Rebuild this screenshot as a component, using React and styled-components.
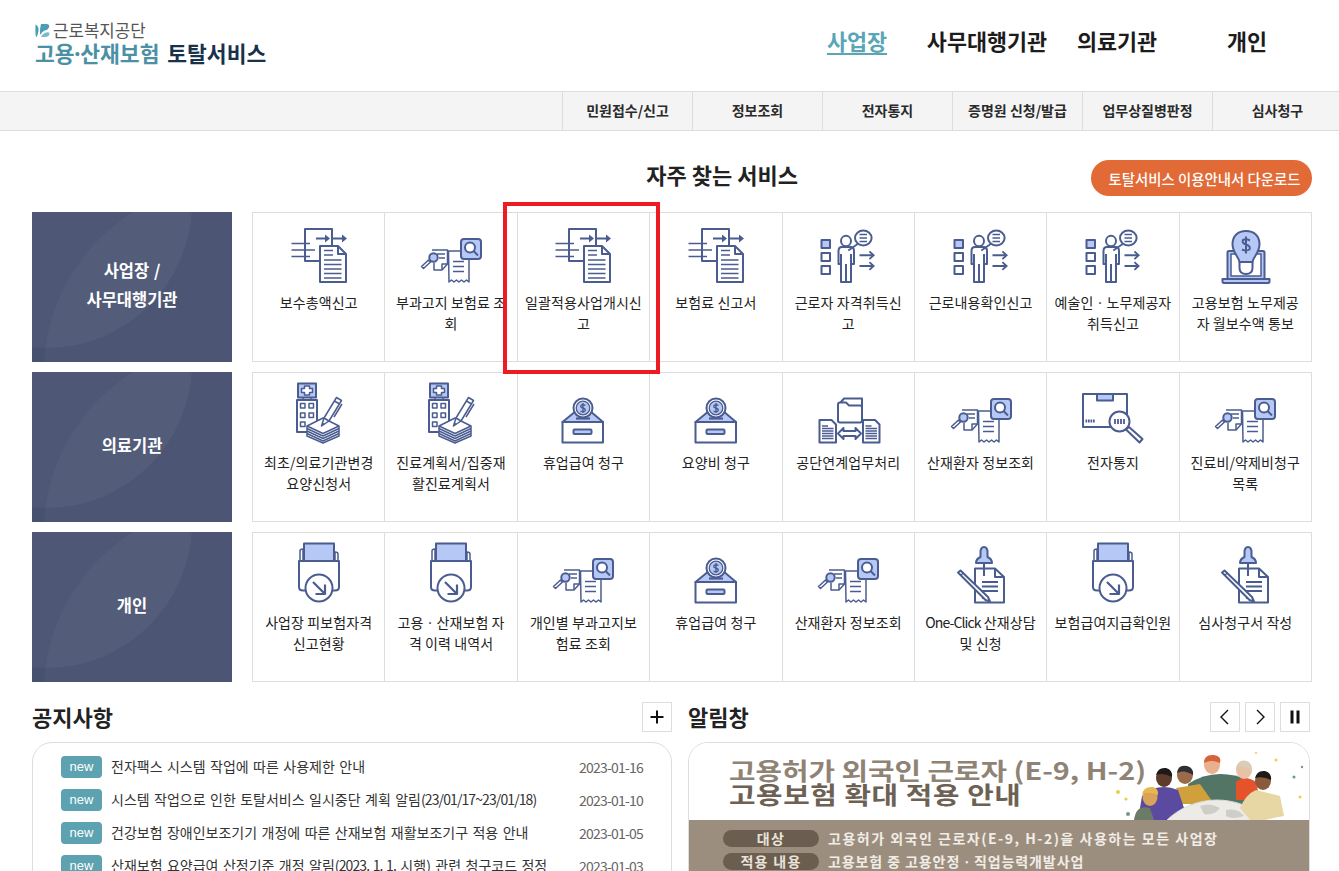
import React from 'react';
import styled, { createGlobalStyle } from 'styled-components';

const FONT = `"Noto Sans CJK KR", "Noto Sans", sans-serif`;

const GlobalStyle = createGlobalStyle`
  html, body { margin: 0; padding: 0; background: #fff; overflow: hidden; }
  body { font-family: ${FONT}; color: #222; }
  * { box-sizing: border-box; }
`;

const Page = styled.div`
  position: relative;
  width: 1339px;
  height: 871px;
  overflow: hidden;
  background: #fff;
`;

const Header = styled.header`
  height: 91px;
  display: flex;
  justify-content: space-between;
  padding: 0 27px 0 35px;
`;
const Logo = styled.div`
  display: flex;
  flex-direction: column;
  padding-top: 20px;
`;
const LogoTop = styled.div`
  display: flex;
  align-items: center;
  gap: 3px;
  height: 20px;
  font-size: 16.8px;
  line-height: 20px;
  color: #555;
`;
const LogoMain = styled.div`
  font-size: 21.5px;
  line-height: 26px;
  font-weight: 700;
  color: #17324a;
  white-space: nowrap;
`;
const LogoAccent = styled.span`
  color: #4b91a5;
  margin-right: 3px;
`;
const LogoDot = styled.span`
  margin: 0 -3.5px;
`;
const TopNav = styled.nav`
  display: flex;
  padding-top: 25px;
`;
const TopNavItem = styled.a`
  width: 130px;
  height: 32px;
  text-align: center;
  font-size: 21.8px;
  line-height: 32px;
  font-weight: 700;
  color: ${p => (p.$active ? '#5aa5b6' : '#1c1c1c')};
  text-decoration: ${p => (p.$active ? 'underline' : 'none')};
  text-underline-offset: 3px;
`;

const SubNav = styled.div`
  height: 40px;
  display: flex;
  padding-left: 562px;
  background: #f4f4f4;
  border-top: 1px solid #ddd;
  border-bottom: 1px solid #ddd;
  overflow: hidden;
`;
const SubNavItem = styled.a`
  flex: 0 0 130px;
  text-align: center;
  font-size: 14px;
  line-height: 36px;
  font-weight: 700;
  color: #2a2a2a;
  border-left: 1px solid #ddd;
`;

const Main = styled.main`
  padding: 29px 27px 0 32px;
`;
const ServiceHead = styled.div`
  height: 36px;
  display: flex;
  justify-content: flex-end;
  align-items: center;
  gap: 293px;
  margin-bottom: 16px;
`;
const ServiceTitle = styled.h2`
  margin: 0 0 9px;
  font-size: 22px;
  line-height: 30px;
  font-weight: 700;
  color: #222;
`;
const GuideButton = styled.a`
  width: 221px;
  height: 36px;
  padding-left: 6px;
  border-radius: 18px;
  background: #e26a36;
  color: #fff;
  font-size: 14.4px;
  line-height: 37px;
  font-weight: 500;
  text-align: center;
  white-space: nowrap;
`;

const Row = styled.section`
  display: grid;
  grid-template-columns: 200px 1060px;
  column-gap: 20px;
  height: 150px;
  margin-bottom: 10px;
`;
const RowLabel = styled.div`
  position: relative;
  overflow: hidden;
  display: flex;
  flex-direction: column;
  align-items: center;
  justify-content: center;
  padding-bottom: 4px;
  background: #475170;
  color: #fff;
  font-size: 16.5px;
  line-height: 29px;
  font-weight: 700;
  word-spacing: 1px;
  &::before, &::after {
    content: '';
    position: absolute;
    border-radius: 50%;
  }
  &::before {
    left: -130px;
    top: -154px;
    width: 290px;
    height: 290px;
    background: rgba(255, 255, 255, 0.04);
  }
  &::after {
    left: 12px;
    top: -28px;
    width: 376px;
    height: 376px;
    background: rgba(255, 255, 255, 0.03);
  }
  span { position: relative; z-index: 1; }
`;
const ServiceGrid = styled.div`
  display: grid;
  grid-template-columns: repeat(8, 1fr);
  border-top: 1px solid #ddd;
  border-left: 1px solid #ddd;
`;
const ServiceCell = styled.a`
  display: flex;
  flex-direction: column;
  align-items: center;
  padding: 7px 7px 0;
  border-right: 1px solid #ddd;
  border-bottom: 1px solid #ddd;
  font-size: 14px;
  line-height: 21px;
  color: #222;
  text-align: center;
  word-break: break-all;
  letter-spacing: 0.1px;
`;
const CellLabel = styled.span`
  display: block;
  margin-top: 8px;
`;
const Narrow = styled.span`
  letter-spacing: -0.9px;
`;

const IconSvg = styled.svg.attrs({ viewBox: '0 0 80 64' })`
  flex: none;
  width: 80px;
  height: 64px;
  fill: none;
  stroke: #4b5d90;
  stroke-width: 2;
  stroke-linejoin: round;
  .f { fill: #b6c9f6; }
  .w { fill: #fff; }
  .s { fill: #4b5d90; stroke: none; }
  .t { stroke-width: 1.5; }
`;

const Docs = () => (
  <IconSvg>
    <rect className="w" x="26" y="9" width="27" height="32" />
    <path className="t" d="M12.5 23.5H31M12.5 30H36M12.5 36.5H31" />
    <path d="M37 18.5H47M54 18.5H64" />
    <path className="s" d="M46 14.5l5 4-5 4zM63 14.5l5 4-5 4z" />
    <path className="w" d="M41 26H59L67 34V62H41Z" />
    <path d="M59 26V34H67" />
    <path className="t" d="M45 30.5H54M45 35H54M45 40H62.5M45 44.5H62.5M45 49H62.5M45 53.5H62.5M45 58H62.5" />
  </IconSvg>
);

const SearchBill = () => (
  <IconSvg>
    <path className="w t" d="M21 30H36.5V44L31 50H23V43" />
    <path className="t" d="M31 50V44H36.5M26 34H34M28 38H34" />
    <path className="w t" d="M37.5 31H58V62l-2.5-2-2.5 2-2.5-2-2.5 2-2.5-2-2.5 2-2.5-2-2.5 2Z" />
    <path className="t" d="M42 41.5H53M42 46.5H53M42 51.5H53" />
    <rect className="f" x="50" y="19" width="20" height="20" rx="3" />
    <circle className="w" cx="59" cy="27.5" r="5" />
    <path d="M62.5 31L67 35.5" />
    <path className="w t" d="M10.500 46.500L17.500 40L19.500 42L12.500 48.500Z" />
    <circle className="f" cx="22.5" cy="37.5" r="4.2" />
  </IconSvg>
);

const Presenter = () => (
  <IconSvg>
    <rect className="f" x="13.5" y="20" width="8.500" height="8" />
    <rect x="13.5" y="33" width="8.500" height="8" />
    <rect x="13.5" y="46" width="8.500" height="8" />
    <ellipse cx="38" cy="21" rx="5" ry="5.200" />
    <path d="M33 62V44H30.500V31Q30.500 27 34 27H42.500Q46 27 46 31V44H43V62ZM38 62V44M33 34V44M43 34V44" />
    <ellipse className="w" cx="55.300" cy="18" rx="8.300" ry="7.500" />
    <path strokeWidth="1.600" d="M51.500 14.500H59M51.500 18H59M51.500 21.500H59" />
    <path d="M49.700 24L40.300 30.500" strokeWidth="1.800" />
    <path d="M51.500 35.300H65M51.500 46H65" />
    <path className="s" d="M62 30.800l5 4.500-5 4.500-1.200-1.200 3.300-3.300-3.300-3.300zM62 41.500l5 4.500-5 4.500-1.200-1.200 3.300-3.300-3.300-3.300z" />
  </IconSvg>
);

const Bulb = () => (
  <IconSvg>
    <path className="f" d="M22.500 59V32.500Q22.500 31 24 31H58Q59.500 31 59.500 32.500V59Z" />
    <rect className="w t" x="26" y="34" width="30" height="22" />
    <path className="f" d="M17.500 59H64.500V61.500Q64.500 63 63 63H19Q17.500 63 17.500 61.500Z" />
    <path className="f" d="M34.500 42C34 37 27.500 33 27.500 24C27.500 16 33 11 41 11C49 11 54.500 16 54.500 24C54.500 33 48 37 47.500 42Z" />
    <path className="w" d="M34.500 42H47.500V48Q47.500 54 41 54Q34.500 54 34.500 48Z" />
    <path d="M45 20.500Q41 18.500 38 20Q36.500 23 41 24.500Q46 26 44.500 29.500Q41 31.500 37 29.500M41 16.500V33.500" />
  </IconSvg>
);

const Hospital = () => (
  <IconSvg>
    <rect className="f" x="19" y="3.500" width="18" height="14" />
    <path className="w t" d="M25.500 6H30.500V8.500H33.500V12.500H30.500V15H25.500V12.500H22.500V8.500H25.500Z" />
    <path className="t" d="M24 17.500V20M32 17.500V20" />
    <rect className="w" x="18" y="20" width="20" height="32" />
    <path className="t" d="M21.500 23.500h4.500v4.500h-4.500zM30 23.500h4.500v4.500h-4.500zM21.500 33h4.500v4.500h-4.500zM30 33h4.500v4.500h-4.500zM21.500 42h4.500v4.500h-4.500z" />
    <path className="w t" d="M28 46V56L44 63L60 56V46L44 38Z" />
    <path className="t" d="M28 46L44 53.500L60 46M28 48.500L44 56L60 48.500M28 51L44 58.500L60 51M28 53.500L44 61L60 53.500" />
    <path className="w t" d="M42.500 46L45 38L57.500 17.500L62.500 20.500L50 41Z" />
    <path className="t" d="M45 38L50 41M55.500 21L60.500 24M63 24L55 37" />
    <path className="s" d="M42.500 46L43.500 42.500L46 44Z" />
  </IconSvg>
);

const CoinBox = () => (
  <IconSvg>
    <path className="f" d="M19.500 42L33 31H47L60 42Z" />
    <rect className="w" x="19.500" y="42" width="40.500" height="20.500" />
    <rect className="f" x="30.500" y="49.500" width="18" height="4.500" rx="1" />
    <circle className="w" cx="40" cy="28" r="9.500" />
    <circle className="f" cx="40" cy="28" r="6.800" strokeWidth="1.300" />
    <path strokeWidth="1.400" d="M42.500 25.500Q40 24 38 25.500Q37 27.500 40 28Q43 29 42 31Q40 32.500 37.500 31M40 23V33" />
    <path strokeWidth="2.200" d="M33 38.500H47" />
  </IconSvg>
);

const FolderLink = () => (
  <IconSvg>
    <path className="w" d="M33 28V22L36 18.500H54V32" />
    <path className="w" d="M30 24.500Q30 22.500 32 22.500H38L41 25.500H52Q54 25.500 54 27.500V40.500Q54 42.500 52 42.500H32Q30 42.500 30 40.500Z" />
    <path className="w" d="M11.500 40H23.500L28 44.500V62.500H11.500Z" />
    <path className="t" d="M14 46H20M14 48.500H25.500M14 51H25.500M14 53.500H25.500M14 56H25.500M14 58.500H25.500" />
    <path className="w" d="M55 40H67L71.500 44.500V62.500H55Z" />
    <path className="t" d="M57.500 46H63.500M57.500 48.500H69M57.500 51H69M57.500 53.500H69M57.500 56H69M57.500 58.500H69" />
    <path className="w" d="M30 53.500L35.500 48V51H47.500V48L53 53.500L47.500 59V56H35.500V59Z" />
  </IconSvg>
);

const BoxSearch = () => (
  <IconSvg>
    <rect x="10" y="14" width="44" height="33" />
    <rect className="f" x="24" y="14" width="16" height="6.500" />
    <path strokeWidth="3" d="M12.500 41h1.700m.8 0h1.700m.8 0h1.700m.8 0h1.700" />
    <circle className="w" cx="46.500" cy="41.500" r="10" />
    <path strokeWidth="1.800" d="M42 39V44M45 39V44M48 39V44M51 39V44" />
    <path className="w" d="M53 49.500L56 47L69.500 59L66.500 62.500Z" />
  </IconSvg>
);

const Printer = () => (
  <IconSvg>
    <path className="w t" d="M21 20.500V11Q21 9 24 9V20.500M59 20.500V14Q59 12 56 12V20.500" />
    <rect className="f" x="25" y="3.500" width="30" height="17.500" />
    <path className="w" d="M20 21H60V47Q60 50.500 56 50.500H24Q20 50.500 20 47Z" />
    <circle className="w" cx="40" cy="48" r="13.500" />
    <path strokeWidth="2.200" d="M34 42L45.500 53.500M46 44.500V54H36.500" />
  </IconSvg>
);

const PinDoc = () => (
  <IconSvg>
    <path className="w" d="M34 28.500H54L63 37V62.500H34Z" />
    <path d="M54 28.500V37H63M41 42H57M41 46.500H57M41 51H57M41 58H44" />
    <path className="f" d="M35 23Q35 19 39.500 17V12.500Q39.500 7 43 7Q46.500 7 46.500 12.500V17Q51 19 51 23Z" />
    <path d="M43 23V36" />
    <path className="w" d="M17 32.500L19.500 30.500L47 57L49 61.500L44.500 60Z" />
    <path className="t" d="M20 35L22.500 33" />
  </IconSvg>
);

const ICONS = { Docs, SearchBill, Presenter, Bulb, Hospital, CoinBox, FolderLink, BoxSearch, Printer, PinDoc };

const ROWS = [
  {
    label: ['사업장 /', '사무대행기관'],
    items: [
      ['Docs', '보수총액신고'],
      ['SearchBill', '부과고지 보험료 조회'],
      ['Docs', '일괄적용사업개시신고'],
      ['Docs', '보험료 신고서'],
      ['Presenter', '근로자 자격취득신고'],
      ['Presenter', '근로내용확인신고'],
      ['Presenter', '예술인ㆍ노무제공자 취득신고'],
      ['Bulb', '고용보험 노무제공자 월보수액 통보'],
    ],
  },
  {
    label: ['의료기관'],
    items: [
      ['Hospital', '최초/의료기관변경 요양신청서'],
      ['Hospital', '진료계획서/집중재활진료계획서'],
      ['CoinBox', '휴업급여 청구'],
      ['CoinBox', '요양비 청구'],
      ['FolderLink', '공단연계업무처리'],
      ['SearchBill', '산재환자 정보조회'],
      ['BoxSearch', '전자통지'],
      ['SearchBill', '진료비/약제비청구목록'],
    ],
  },
  {
    label: ['개인'],
    items: [
      ['Printer', '사업장 피보험자격 신고현황'],
      ['Printer', '고용ㆍ산재보험 자격 이력 내역서'],
      ['SearchBill', '개인별 부과고지보험료 조회'],
      ['CoinBox', '휴업급여 청구'],
      ['SearchBill', '산재환자 정보조회'],
      ['PinDoc', 'One-Click 산재상담 및 신청'],
      ['Printer', '보험급여지급확인원'],
      ['PinDoc', '심사청구서 작성'],
    ],
  },
];

const NOTICES = [
  ['전자팩스 시스템 작업에 따른 사용제한 안내', '2023-01-16'],
  ['시스템 작업으로 인한 토탈서비스 일시중단 계획 알림(23/01/17~23/01/18)', '2023-01-10'],
  ['건강보험 장애인보조기기 개정에 따른 산재보험 재활보조기구 적용 안내', '2023-01-05'],
  ['산재보험 요양급여 산정기준 개정 알림(2023. 1. 1. 시행) 관련 청구코드 정정', '2023-01-03'],
];

// Latin runs are set tighter than the Hangul around them, as in the reference.
const LATIN_RUN = /(One-Click|\([\d/~]+\)|\(2023\. 1\. 1\.)/;
const withNarrowLatin = text =>
  text.split(LATIN_RUN).map((part, i) => (i % 2 ? <Narrow key={i}>{part}</Narrow> : part));

const Bottom = styled.div`
  display: grid;
  grid-template-columns: 640px 622px;
  column-gap: 16px;
  margin-top: 20px;
`;
const PanelHead = styled.div`
  height: 30px;
  display: flex;
  justify-content: space-between;
  align-items: center;
  margin-bottom: 10px;
`;
const PanelTitle = styled.h3`
  margin: 0 0 2px;
  font-size: 22px;
  line-height: 28px;
  font-weight: 700;
  color: #222;
`;
const Controls = styled.div`
  display: flex;
  gap: 5px;
`;
const CtrlButton = styled.button`
  width: 30px;
  height: 30px;
  padding: 0;
  display: flex;
  align-items: center;
  justify-content: center;
  background: #fff;
  border: 1px solid #ddd;
`;
const CtrlIcon = styled.svg.attrs({ viewBox: '0 0 16 16' })`
  width: 16px;
  height: 16px;
  fill: none;
  stroke: #111;
  stroke-width: ${p => p.$w || 1.4};
`;
const Card = styled.div`
  height: 200px;
  border: 1px solid #ddd;
  border-radius: 20px;
  overflow: hidden;
`;
const NoticeList = styled.ul`
  list-style: none;
  margin: 0;
  padding: 7px 28px 0 28px;
`;
const NoticeRow = styled.li`
  display: flex;
  align-items: center;
  height: 33px;
`;
const Badge = styled.span`
  flex: none;
  width: 41px;
  height: 22px;
  margin-right: 9px;
  border-radius: 4px;
  background: #5ca2b0;
  color: #fff;
  font-family: "Liberation Sans", sans-serif;
  font-size: 13px;
  line-height: 22px;
  text-align: center;
`;
const NoticeText = styled.a`
  flex: 1;
  min-width: 0;
  margin-bottom: 2px;
  font-size: 14px;
  color: #333;
  white-space: nowrap;
  word-spacing: 1.3px;
`;
const NoticeDate = styled.span`
  flex: none;
  font-size: 14px;
  color: #666;
  letter-spacing: -0.8px;
`;

const BannerTop = styled.div`
  position: relative;
  height: 77px;
  padding: 15px 0 0 40px;
  background: #fff;
`;
const BannerLine = styled.div`
  font-size: 24px;
  line-height: 24px;
  height: 24px;
  font-weight: 700;
  white-space: nowrap;
  transform: scaleX(1.2);
  transform-origin: left center;
  letter-spacing: ${p => (p.$dark ? '0.5px' : '0')};
  color: ${p => (p.$dark ? '#6d6154' : '#8f8375')};
`;
const People = styled.svg.attrs({ viewBox: '0 0 205 70' })`
  position: absolute;
  right: 0;
  bottom: 0;
  width: 205px;
  height: 70px;
`;
const BannerBottom = styled.div`
  height: 123px;
  padding: 10px 0 0 34px;
  background: #9c8e7f;
  display: flex;
  flex-direction: column;
  gap: 6px;
`;
const BannerRow = styled.div`
  display: flex;
  align-items: center;
  gap: 9px;
  height: 17px;
`;
const Pill = styled.span`
  flex: none;
  width: 96px;
  height: 17px;
  border-radius: 9px;
  background: #6b5e50;
  color: #e9e3da;
  font-size: 14px;
  line-height: 17px;
  font-weight: 700;
  letter-spacing: 1.3px;
  text-align: center;
`;
const BannerText = styled.span`
  font-size: 14px;
  line-height: 17px;
  font-weight: 700;
  color: #f1ece5;
  white-space: nowrap;
  letter-spacing: ${p => p.$ls};
`;

const RedFrame = styled.div`
  position: absolute;
  left: 503px;
  top: 202px;
  width: 157px;
  height: 172px;
  border: 4px solid #ed1c24;
  pointer-events: none;
`;

const LogoMark = () => (
  <svg width="15" height="15" viewBox="0 0 15 15">
    <path d="M0.500 1.500Q4 3 3.500 8Q3 12 1 14.500Q0 9 0.500 1.500Z" fill="#4b9db5" />
    <path d="M6 1H11.500Q15 1 14 4.500Q13 7 9.500 7.500Q7 8.500 5 12Q4.500 6 6 1Z" fill="#4b9db5" />
    <path d="M6 14Q8 10 11 9.500Q14 9 14.500 10Q14.500 14 10 14Z" fill="#7db9c9" />
  </svg>
);

const PeopleArt = () => (
  <People>
    <g fill="#e7d14a">
      <circle cx="14" cy="42" r="2" />
      <circle cx="22" cy="49" r="1.600" />
      <circle cx="196" cy="47" r="1.500" />
      <circle cx="172" cy="10" r="1.500" />
      <circle cx="152" cy="3" r="1" />
    </g>
    <g fill="#6f9a8a">
      <circle cx="190" cy="27" r="1.500" />
      <circle cx="24" cy="64" r="2" />
      <circle cx="198" cy="17" r="1.200" />
    </g>
    <path d="M84 34Q110 16 146 30L152 62H88Z" fill="#527565" />
    <ellipse cx="108" cy="15" rx="8" ry="9" fill="#e8b08f" />
    <path d="M100 13Q100 4 110 5Q118 6 116 13Q107 9 100 13Z" fill="#d8623a" />
    <path d="M132 50V32Q140 24 152 32L156 50Z" fill="#e4532a" />
    <ellipse cx="140" cy="20" rx="8" ry="9" fill="#e6c3a6" />
    <path d="M132 17Q135 9 143 11Q149 14 148 22Q142 15 132 17Z" fill="#d9cdb8" />
    <path d="M72 38L96 34L110 54H78Z" fill="#cfa03c" />
    <ellipse cx="81" cy="25" rx="8" ry="9" fill="#9a6a4a" />
    <path d="M73 23Q74 14 83 16Q90 18 89 25Q80 19 73 23Z" fill="#2e3036" />
    <path d="M38 46Q54 32 74 40L84 70H34Z" fill="#5a4aa0" />
    <ellipse cx="60" cy="28" rx="8" ry="9" fill="#5e3b2a" />
    <path d="M52 25Q54 17 62 18Q69 20 68 27Q59 22 52 25Z" fill="#1f1a1a" />
    <path d="M30 70Q32 54 46 58L50 70Z" fill="#6c7a68" />
    <ellipse cx="46" cy="47" rx="7.500" ry="9" fill="#d9a35a" />
    <path d="M38 44Q40 36 49 37Q55 39 54 45Q45 41 38 44Z" fill="#e5b94f" />
    <circle cx="113" cy="122.500" r="72.500" fill="#ecebe8" stroke="#dcdad4" />
    <path d="M96 56Q106 52 116 58Q110 66 100 64Z M122 60Q134 58 140 66Q128 70 122 66Z" fill="#cfcdc7" />
    <path d="M136 58Q142 44 152 40L176 46L180 66L160 70H146Z" fill="#e6d7a4" />
    <ellipse cx="159" cy="31" rx="8" ry="9" fill="#8a5a3c" />
    <path d="M151 28Q153 20 161 21Q168 23 167 30Q159 26 151 28Z" fill="#1d1a18" />
  </People>
);

export default function App() {
  return (
    <Page>
      <GlobalStyle />
      <Header>
        <Logo>
          <LogoTop>
            <LogoMark />
            근로복지공단
          </LogoTop>
          <LogoMain>
            <LogoAccent>
              고용<LogoDot>·</LogoDot>산재보험
            </LogoAccent>{' '}
            토탈서비스
          </LogoMain>
        </Logo>
        <TopNav>
          <TopNavItem $active>사업장</TopNavItem>
          <TopNavItem>사무대행기관</TopNavItem>
          <TopNavItem>의료기관</TopNavItem>
          <TopNavItem>개인</TopNavItem>
        </TopNav>
      </Header>
      <SubNav>
        {['민원접수/신고', '정보조회', '전자통지', '증명원 신청/발급', '업무상질병판정', '심사청구'].map(t => (
          <SubNavItem key={t}>{t}</SubNavItem>
        ))}
      </SubNav>
      <Main>
        <ServiceHead>
          <ServiceTitle>자주 찾는 서비스</ServiceTitle>
          <GuideButton>토탈서비스 이용안내서 다운로드</GuideButton>
        </ServiceHead>
        {ROWS.map(row => (
          <Row key={row.label.join()}>
            <RowLabel>
              {row.label.map(l => (
                <span key={l}>{l}</span>
              ))}
            </RowLabel>
            <ServiceGrid>
              {row.items.map(([icon, text], i) => {
                const Icon = ICONS[icon];
                return (
                  <ServiceCell key={i}>
                    <Icon />
                    <CellLabel>{withNarrowLatin(text)}</CellLabel>
                  </ServiceCell>
                );
              })}
            </ServiceGrid>
          </Row>
        ))}
        <Bottom>
          <div>
            <PanelHead>
              <PanelTitle>공지사항</PanelTitle>
              <CtrlButton aria-label="더보기">
                <CtrlIcon $w={2}>
                  <path d="M8 1.500V14.500M1.500 8H14.500" />
                </CtrlIcon>
              </CtrlButton>
            </PanelHead>
            <Card>
              <NoticeList>
                {NOTICES.map(([t, d]) => (
                  <NoticeRow key={d}>
                    <Badge>new</Badge>
                    <NoticeText>{withNarrowLatin(t)}</NoticeText>
                    <NoticeDate>{d}</NoticeDate>
                  </NoticeRow>
                ))}
              </NoticeList>
            </Card>
          </div>
          <div>
            <PanelHead>
              <PanelTitle>알림창</PanelTitle>
              <Controls>
                <CtrlButton aria-label="이전">
                  <CtrlIcon>
                    <path d="M11 1L4 8L11 15" />
                  </CtrlIcon>
                </CtrlButton>
                <CtrlButton aria-label="다음">
                  <CtrlIcon>
                    <path d="M5 1L12 8L5 15" />
                  </CtrlIcon>
                </CtrlButton>
                <CtrlButton aria-label="정지">
                  <CtrlIcon $w={3}>
                    <path d="M5 1.500V14.500M11 1.500V14.500" />
                  </CtrlIcon>
                </CtrlButton>
              </Controls>
            </PanelHead>
            <Card>
              <BannerTop>
                <BannerLine>고용허가 외국인 근로자 (E-9, H-2)</BannerLine>
                <BannerLine $dark>고용보험 확대 적용 안내</BannerLine>
                <PeopleArt />
              </BannerTop>
              <BannerBottom>
                <BannerRow>
                  <Pill>대상</Pill>
                  <BannerText $ls="1.500px">고용허가 외국인 근로자(E-9, H-2)을 사용하는 모든 사업장</BannerText>
                </BannerRow>
                <BannerRow>
                  <Pill>적용 내용</Pill>
                  <BannerText $ls="0.900px">고용보험 중 고용안정ㆍ직업능력개발사업</BannerText>
                </BannerRow>
              </BannerBottom>
            </Card>
          </div>
        </Bottom>
      </Main>
      <RedFrame />
    </Page>
  );
}
